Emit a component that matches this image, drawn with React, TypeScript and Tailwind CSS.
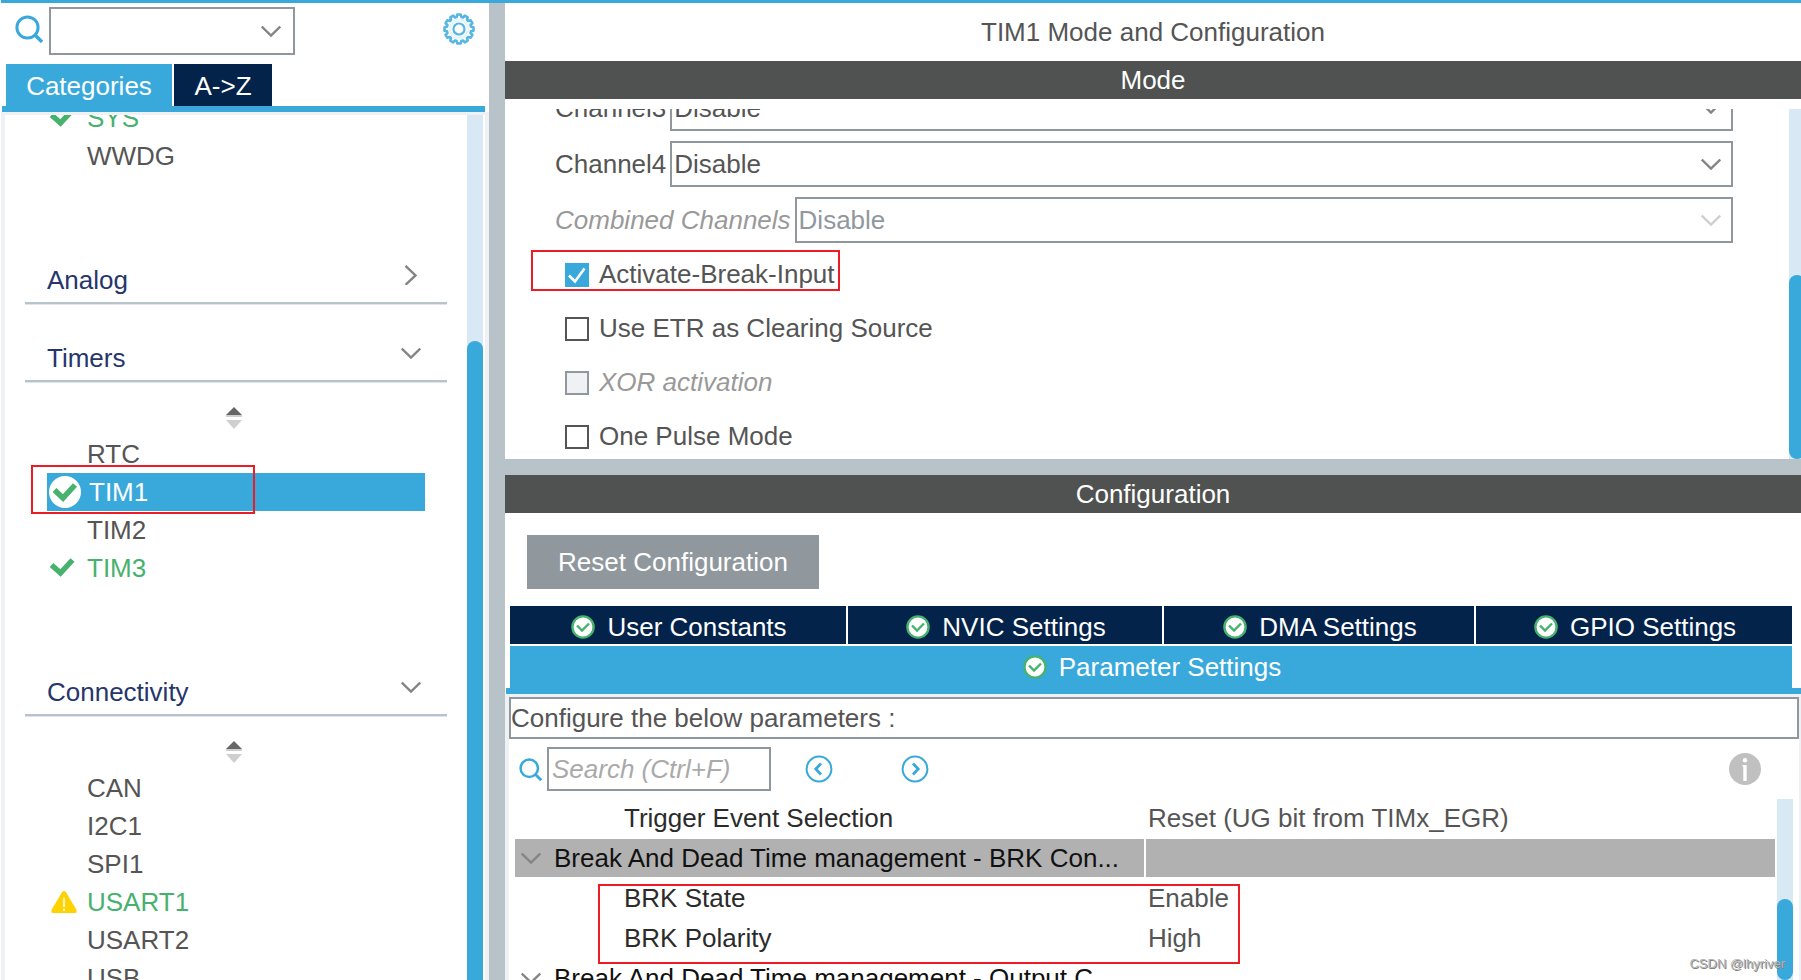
import type { ReactNode } from "react";

function Chevron({ dir = "down", faded = false }: { dir?: "down" | "right"; faded?: boolean }) {
  return (
    <svg
      width="20"
      height="20"
      viewBox="0 0 20 20"
      fill="none"
      stroke={faded ? "#cfcfcf" : "#858585"}
      strokeWidth="2.4"
      className="shrink-0"
      aria-hidden="true"
    >
      {dir === "down" ? <path d="M0.8 5.5 L10 14.5 L19.2 5.5" /> : <path d="M4.5 0.8 L14.5 10.5 L4.5 19.8" />}
    </svg>
  );
}

function Magnifier({ size }: { size: number }) {
  return (
    <svg width={size} height={size} viewBox="0 0 28 28" fill="none" stroke="#39a9dc" className="shrink-0" aria-hidden="true">
      <circle cx="12.5" cy="12.5" r="10.6" strokeWidth="3" />
      <path d="M19.5 19.5 L27 27" strokeWidth="3.4" />
    </svg>
  );
}

function gearPath() {
  const teeth = 12;
  const pts: string[] = [];
  for (let i = 0; i < teeth; i++) {
    const step = (Math.PI * 2) / teeth;
    const a = i * step - Math.PI / 2;
    const at = (r: number, t: number) =>
      `${(16 + r * Math.cos(a + t * step)).toFixed(2)} ${(16 + r * Math.sin(a + t * step)).toFixed(2)}`;
    pts.push(`${i === 0 ? "M" : "L"}${at(14.6, -0.22)}`, `L${at(14.6, 0.22)}`, `L${at(12.2, 0.36)}`, `L${at(12.2, 0.64)}`);
  }
  return pts.join(" ") + "Z";
}

function Gear() {
  return (
    <svg width="32" height="32" viewBox="0 0 32 32" fill="none" stroke="#39a9dc" aria-hidden="true">
      <path d={gearPath()} strokeWidth="2.6" strokeOpacity="0.85" strokeLinejoin="round" />
      <circle cx="16" cy="16" r="9" strokeWidth="3" strokeOpacity="0.12" />
      <circle cx="16" cy="16" r="5.5" strokeWidth="2.2" strokeOpacity="0.85" />
    </svg>
  );
}

function Tick() {
  return (
    <svg width="26" height="22" viewBox="0 0 26 22" fill="none" stroke="#46b26e" strokeWidth="5.5" aria-hidden="true">
      <path d="M2.5 8 L11.5 16 L23.5 3" />
    </svg>
  );
}

function TickDisc() {
  return (
    <svg width="32" height="32" viewBox="0 0 32 32" fill="none" aria-hidden="true">
      <circle cx="16" cy="16" r="16" fill="#fff" />
      <path d="M5.5 14 L14 22 L26 9" stroke="#46b26e" strokeWidth="5.5" />
    </svg>
  );
}

function Warning() {
  return (
    <svg width="26" height="22" viewBox="0 0 26 22" className="ml-[2px]" aria-hidden="true">
      <path d="M13 0 Q14.5 0 15.5 2 L25.5 19 Q26 22 24.5 22 H1.5 Q0 22 0.5 19 L10.5 2 Q11.5 0 13 0Z" fill="#ffd200" />
      <path d="M13 6.5 V16 M13 17.5 V20" stroke="#fff6c8" strokeWidth="2" />
    </svg>
  );
}

function TabCheck() {
  return (
    <svg width="24" height="24" viewBox="0 0 24 24" fill="none" className="shrink-0" aria-hidden="true">
      <circle cx="12" cy="12" r="10.6" fill="#fff" stroke="#46b26e" strokeWidth="2.4" />
      <path d="M6 10.5 L11 15.5 L18 8.5" stroke="#46b26e" strokeWidth="2.4" />
    </svg>
  );
}

function CircleArrow({ dir }: { dir: "left" | "right" }) {
  return (
    <svg width="28" height="28" viewBox="0 0 28 28" fill="none" stroke="#39a9dc" strokeWidth="2" aria-hidden="true">
      <circle cx="14" cy="14" r="12.4" />
      {dir === "left" ? <path d="M16 8.5 L10.8 14 L16 19.5" strokeWidth="2.8" /> : <path d="M12 8.5 L17.2 14 L12 19.5" strokeWidth="2.8" />}
    </svg>
  );
}

function Info() {
  return (
    <svg width="32" height="32" viewBox="0 0 32 32" aria-hidden="true">
      <circle cx="16" cy="16" r="16" fill="#c0c0c0" />
      <circle cx="16" cy="7.3" r="2.2" fill="#fff" />
      <path d="M13.5 12 H17.7 V28 H14.3 V13.6 H13.5Z" fill="#fff" />
    </svg>
  );
}

function SortHandle() {
  return (
    <button type="button" aria-label="Sort" className="mx-auto block">
      <svg width="18" height="22" viewBox="0 0 18 22" aria-hidden="true">
        <path d="M9 0 L17 8 H1Z" fill="#666" />
        <path d="M1 8 H17 V10 H1Z" fill="#cfcfcf" />
        <path d="M1 13 H17 L9 22Z" fill="#cfcfcf" />
      </svg>
    </button>
  );
}

type Mark = "tick" | "disc" | "warning";

function Peripheral({ name, mark, selected = false }: { name: string; mark?: Mark; selected?: boolean }) {
  const tone = selected ? "bg-[#39a9dc] text-white" : mark ? "text-[#46b26e]" : "text-[#555]";
  return (
    <li className={`relative mx-[42px] ${tone}`}>
      <button type="button" className="flex h-[38px] w-full items-center text-left">
        <span className={`flex shrink-0 pl-[2px] ${selected ? "w-[42px]" : "w-10"}`}>
          {mark === "tick" && <Tick />}
          {mark === "disc" && <TickDisc />}
          {mark === "warning" && <Warning />}
        </span>
        {name}
      </button>
      {selected && (
        <span className="pointer-events-none absolute -top-2 -left-4 h-[49px] w-[224px] border-2 border-[#ed1c24]" />
      )}
    </li>
  );
}

function Group({ title, open, children }: { title: string; open: boolean; children?: ReactNode }) {
  return (
    <section>
      <h3 className="mx-5 border-b border-[#dfe3f2]">
        <button
          type="button"
          aria-expanded={open}
          className="flex h-10 w-full items-start justify-between border-b-2 border-[#b8c3c9] pt-px pr-[26px] pl-[22px] leading-[30px] text-[#26366b]"
        >
          {title}
          <Chevron dir={open ? "down" : "right"} />
        </button>
      </h3>
      {children}
    </section>
  );
}

function List({ children }: { children: ReactNode }) {
  return (
    <>
      <div className="h-[52px] pt-6 pr-1">
        <SortHandle />
      </div>
      <ul className="mb-[89px]">{children}</ul>
    </>
  );
}

function Sidebar() {
  return (
    <aside className="flex w-[489px] shrink-0 flex-col">
      <div className="flex h-[61px] items-start pt-1 pl-[15px]">
        <label htmlFor="find" className="pt-2">
          <Magnifier size={28} />
        </label>
        <div className="relative ml-[6px] flex h-12 w-[246px] items-center">
          <input id="find" aria-label="Find a peripheral" className="h-full w-full border-2 border-[#90989e] px-1 outline-none" />
          <span className="pointer-events-none absolute right-[14px]">
            <Chevron />
          </span>
        </div>
        <button type="button" aria-label="Settings" className="mt-[6px] mr-[14px] ml-auto">
          <Gear />
        </button>
      </div>
      <div className="flex gap-[2px] pl-[6px] leading-[44px] text-white">
        <button type="button" className="h-[42px] w-[166px] bg-[#39a9dc]">Categories</button>
        <button type="button" className="h-[42px] w-[98px] bg-[#03234b]">A-&gt;Z</button>
      </div>
      <div className="mr-1 ml-[2px] h-[6px] shrink-0 bg-[#39a9dc]" />
      <div className="ml-px flex min-h-0 flex-1 border-x-4 border-t-[3px] border-[#eff1f4]">
        <nav className="min-w-0 flex-1 overflow-hidden">
          <div className="-mt-4">
            <ul className="mb-[89px]">
              <Peripheral name="SYS" mark="tick" />
              <Peripheral name="WWDG" />
            </ul>
            <div className="mb-[37px]">
              <Group title="Analog" open={false} />
            </div>
            <Group title="Timers" open>
              <List>
                <Peripheral name="RTC" />
                <Peripheral name="TIM1" mark="disc" selected />
                <Peripheral name="TIM2" />
                <Peripheral name="TIM3" mark="tick" />
              </List>
            </Group>
            <Group title="Connectivity" open>
              <List>
                <Peripheral name="CAN" />
                <Peripheral name="I2C1" />
                <Peripheral name="SPI1" />
                <Peripheral name="USART1" mark="warning" />
                <Peripheral name="USART2" />
                <Peripheral name="USB" />
              </List>
            </Group>
          </div>
        </nav>
        <div className="mr-[2px] flex w-4 flex-col bg-[#d9e8f5] pt-[226px]">
          <div className="flex-1 rounded-t-full bg-[#39a9dc]" />
        </div>
      </div>
    </aside>
  );
}

function ModeSelect({ id, label, disabled = false }: { id: string; label: string; disabled?: boolean }) {
  return (
    <div className="flex h-[46px] items-center gap-1">
      <label htmlFor={id} className={disabled ? "text-[#999] italic" : ""}>
        {label}
      </label>
      <div className="relative flex h-full flex-1 items-center">
        <select
          id={id}
          disabled={disabled}
          className="h-full w-full appearance-none border-2 border-[#90989e] bg-white pl-[2px] opacity-100 outline-none disabled:text-[#90989e]"
        >
          <option>Disable</option>
        </select>
        <span className="pointer-events-none absolute right-3">
          <Chevron faded={disabled} />
        </span>
      </div>
    </div>
  );
}

function ModeCheck({ label, checked = false, disabled = false }: { label: string; checked?: boolean; disabled?: boolean }) {
  return (
    <div className="relative flex h-[54px] items-center">
      <label className={`flex items-center gap-[10px] leading-[38px] ${disabled ? "text-[#999] italic" : ""}`}>
        <span className="relative flex">
          <input
            type="checkbox"
            defaultChecked={checked}
            disabled={disabled}
            className="size-6 appearance-none border-2 border-[#555] bg-white checked:border-[#39a9dc] checked:bg-[#39a9dc] disabled:border-[#90989e] disabled:bg-[#eff1f4]"
          />
          {checked && (
            <svg viewBox="0 0 24 24" className="pointer-events-none absolute inset-0" fill="none" stroke="#fff" strokeWidth="2.6" aria-hidden="true">
              <path d="M4 12.5 L10 18.5 L19.5 5.5" />
            </svg>
          )}
        </span>
        <span className="pb-[2px]">{label}</span>
      </label>
      {checked && (
        <span className="pointer-events-none absolute top-[2px] -left-[34px] h-[41px] w-[309px] border-2 border-[#ed1c24]" />
      )}
    </div>
  );
}

function ModePanel() {
  return (
    <section className="flex h-[398px] shrink-0 flex-col">
      <h2 className="h-[38px] shrink-0 bg-[#4f5250] text-center leading-[38px] text-white">Mode</h2>
      <div className="mt-[10px] flex min-h-0 flex-1">
        <div className="min-w-0 flex-1 overflow-hidden pr-14 pl-[50px]">
          <div className="-mt-6 flex flex-col gap-[10px]">
            <ModeSelect id="ch3" label="Channel3" />
            <ModeSelect id="ch4" label="Channel4" />
            <ModeSelect id="combined" label="Combined Channels" disabled />
          </div>
          <div className="mt-[5px] ml-[10px]">
            <ModeCheck label="Activate-Break-Input" checked />
            <ModeCheck label="Use ETR as Clearing Source" />
            <ModeCheck label="XOR activation" disabled />
            <ModeCheck label="One Pulse Mode" />
          </div>
        </div>
        <div className="w-3 overflow-hidden bg-[#d9e8f5] pt-[166px]">
          <div className="h-full w-4 rounded-full bg-[#39a9dc]" />
        </div>
      </div>
    </section>
  );
}

function ParamRow({ name, value }: { name: string; value: string }) {
  return (
    <tr>
      <td className="h-[38px] p-0 pl-[109px] text-[#2b2b2b]">{name}</td>
      <td className="p-0 pl-[2px]">{value}</td>
    </tr>
  );
}

function ParamGroupRow({ name, selected = false }: { name: string; selected?: boolean }) {
  return (
    <tr className={selected ? "bg-[#b1b1b1]" : ""}>
      <td className="p-0">
        <div className="flex h-[38px] items-center gap-[13px] pl-[6px] whitespace-nowrap text-[#111]">
          <Chevron />
          {name}
        </div>
      </td>
      <td className="p-0" />
    </tr>
  );
}

function ParamTable() {
  return (
    <table className="w-full table-fixed border-separate border-spacing-[2px] leading-[38px]">
      <tbody>
        <ParamRow name="Trigger Event Selection" value="Reset (UG bit from TIMx_EGR)" />
        <ParamGroupRow name="Break And Dead Time management - BRK Con..." selected />
        <ParamRow name="BRK State" value="Enable" />
        <ParamRow name="BRK Polarity" value="High" />
        <ParamGroupRow name="Break And Dead Time management - Output C..." />
      </tbody>
    </table>
  );
}

const tabClass = "flex h-[38px] items-center justify-center gap-3 bg-[#03234b] pt-1 pl-[2px] text-white";

function ConfigPanel() {
  return (
    <section className="flex min-h-0 flex-1 flex-col">
      <h2 className="h-[38px] shrink-0 bg-[#4f5250] text-center leading-[38px] text-white">Configuration</h2>
      <div className="px-[22px] pt-[22px] pb-[17px]">
        <button type="button" className="h-[54px] w-[292px] bg-[#90989e] text-white">
          Reset Configuration
        </button>
      </div>
      <div className="mr-[9px] ml-[5px] grid grid-cols-[336fr_314fr_310fr_316fr] gap-[2px]">
        <button type="button" className={tabClass}><TabCheck />User Constants</button>
        <button type="button" className={tabClass}><TabCheck />NVIC Settings</button>
        <button type="button" className={tabClass}><TabCheck />DMA Settings</button>
        <button type="button" className={tabClass}><TabCheck />GPIO Settings</button>
        <button type="button" className="col-span-4 flex h-[42px] items-center justify-center gap-3 bg-[#39a9dc] pl-[2px] text-white">
          <TabCheck />
          Parameter Settings
        </button>
      </div>
      <div className="ml-px h-[6px] shrink-0 bg-[#39a9dc]" />
      <div className="flex min-h-0 flex-1 flex-col border-t-[3px] border-r-2 border-l-4 border-[#eff1f4]">
        <p className="h-[42px] shrink-0 border-2 border-[#90989e] leading-[38px]">Configure the below parameters :</p>
        <div className="mt-2 flex h-11 shrink-0 items-center pr-[38px] pl-[10px]">
          <label htmlFor="search">
            <Magnifier size={23} />
          </label>
          <input
            id="search"
            placeholder="Search (Ctrl+F)"
            aria-label="Search"
            className="ml-[5px] h-11 w-[224px] border-2 border-[#90989e] pl-[3px] italic outline-none placeholder:text-[#aaa]"
          />
          <button type="button" aria-label="Previous" className="ml-[34px]"><CircleArrow dir="left" /></button>
          <button type="button" aria-label="Next" className="ml-[68px]"><CircleArrow dir="right" /></button>
          <button type="button" aria-label="Information" className="ml-auto"><Info /></button>
        </div>
        <div className="mt-[6px] flex min-h-0 flex-1 pr-[6px] pl-1">
          <div className="relative min-w-0 flex-1 overflow-hidden">
            <ParamTable />
            <span className="pointer-events-none absolute top-[87px] left-[85px] h-20 w-[642px] border-2 border-[#ed1c24]" />
          </div>
          <div className="relative mt-[2px] flex w-4 flex-col bg-[#d9e8f5] pt-[100px]">
            <div className="flex-1 rounded-full bg-[#39a9dc]" />
            <span className="pointer-events-none absolute right-2 bottom-2 text-[13px] leading-4 whitespace-nowrap text-[#b5b5b5] [text-shadow:1px_1px_0_#808080]">
              CSDN @lhyriver
            </span>
          </div>
        </div>
      </div>
    </section>
  );
}

export default function App() {
  return (
    <div className="flex h-screen flex-col overflow-hidden bg-white font-['Liberation_Sans',Arial,sans-serif] text-[26px] text-[#555]">
      <div className="ml-px h-[3px] shrink-0 bg-[#39a9dc]" />
      <div className="flex min-h-0 flex-1">
        <Sidebar />
        <div className="w-4 shrink-0 bg-[#b8c3c9]" />
        <main className="flex min-w-0 flex-1 flex-col">
          <h1 className="h-[58px] shrink-0 text-center leading-[58px]">TIM1 Mode and Configuration</h1>
          <ModePanel />
          <div className="h-4 shrink-0 bg-[#b8c3c9]" />
          <ConfigPanel />
        </main>
      </div>
    </div>
  );
}
